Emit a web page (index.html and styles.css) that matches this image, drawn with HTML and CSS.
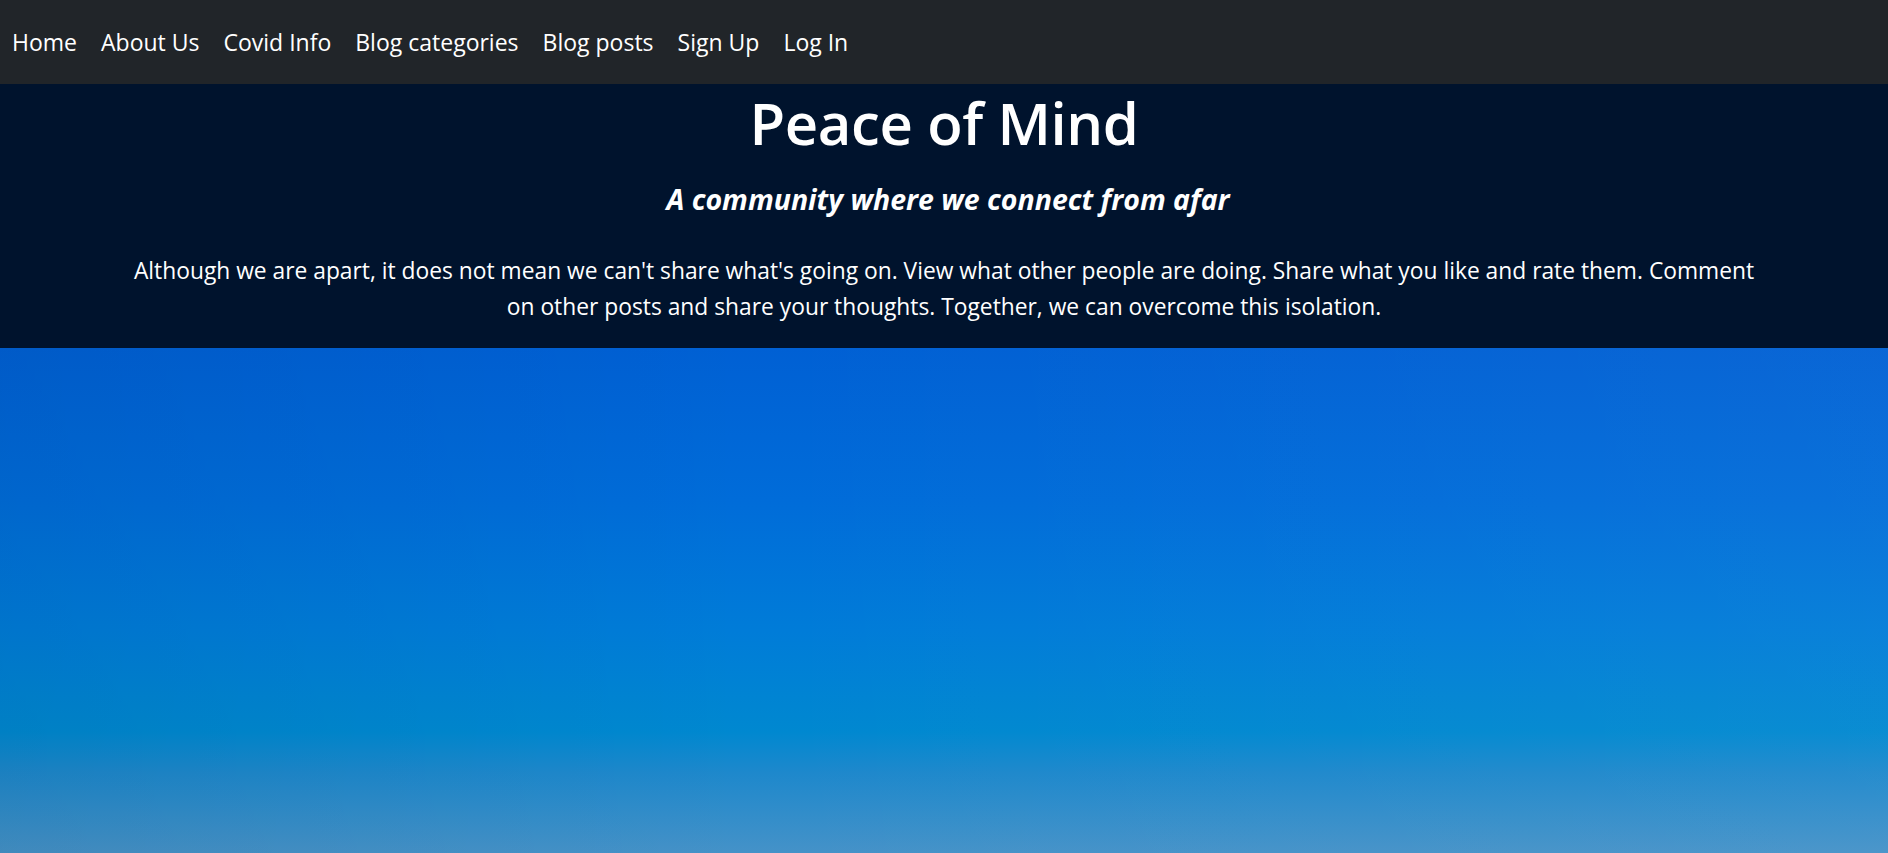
FILE: index.html
```html
<!DOCTYPE html>
<html lang="en">
<head>
<meta charset="utf-8">
<title>Peace of Mind</title>
<link rel="stylesheet" href="styles.css">
</head>
<body>
<nav class="navbar">
  <a class="nav-link" href="#">Home</a>
  <a class="nav-link" href="#">About Us</a>
  <a class="nav-link" href="#">Covid Info</a>
  <a class="nav-link" href="#">Blog categories</a>
  <a class="nav-link" href="#">Blog posts</a>
  <a class="nav-link" href="#">Sign Up</a>
  <a class="nav-link" href="#">Log In</a>
</nav>
<main class="hero">
  <header class="intro">
    <h1 class="title">Peace of Mind</h1>
    <h3 class="tagline">A community where we connect from afar</h3>
    <p class="lead">Although we are apart, it does not mean we can't share what's going on. View what other people are doing. Share what you like and rate them. Comment on other posts and share your thoughts. Together, we can overcome this isolation.</p>
  </header>
  <section class="sky"></section>
</main>
</body>
</html>
```
FILE: styles.css
```css
* { box-sizing: border-box; }
html, body { margin: 0; padding: 0; height: 100%; }
body {
  font-family: "Open Sans", "Noto Sans", sans-serif;
  color: #fff;
  background: #0072d4;
  display: flex;
  flex-direction: column;
  overflow: hidden;
}
.navbar {
  height: 84px;
  background: #212529;
  display: flex;
  align-items: center;
  flex: none;
}
.nav-link {
  color: #fff;
  text-decoration: none;
  font-size: 23px;
  padding: 0 12px;
}
.hero {
  flex: 1;
  display: flex;
  flex-direction: column;
}
.intro {
  background: #00132d;
  text-align: center;
  height: 264px;
  padding-top: 4px;
}
.title {
  margin: 0;
  font-size: 58px;
  font-weight: 600;
  line-height: 1.2;
  letter-spacing: -0.4px;
}
.tagline {
  margin: 24px 0 0 8px;
  font-size: 28.5px;
  font-style: italic;
  font-weight: 700;
  line-height: 1.2;
}
.lead {
  margin: 37px auto 0;
  max-width: 1640px;
  font-size: 22.8px;
  line-height: 36px;
}
.sky {
  flex: 1;
  background:
    linear-gradient(90deg, rgba(0,0,0,0.06) 0%, rgba(0,0,0,0) 40%, rgba(255,255,255,0.04) 100%),
    linear-gradient(180deg, #0060d4 0%, #006cd9 30%, #007cd8 56%, #0088d0 76%, #1d88cc 84%, #4592c8 100%);
}
```
